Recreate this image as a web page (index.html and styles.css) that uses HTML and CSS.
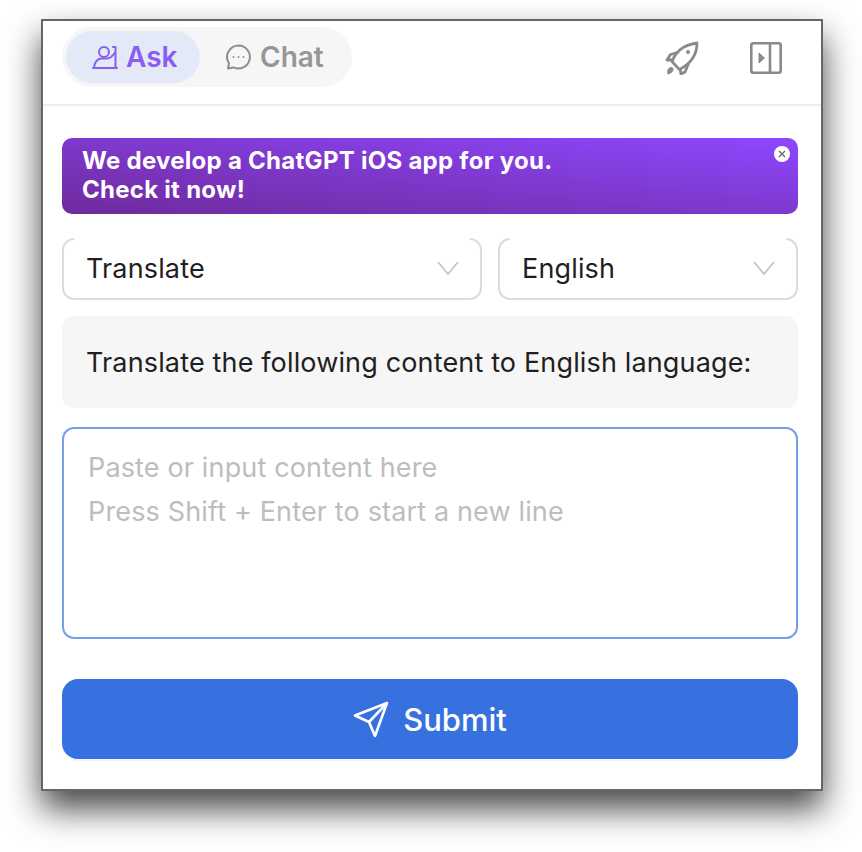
FILE: index.html
```html
<!DOCTYPE html>
<html lang="en">
<head>
<meta charset="utf-8">
<title>Ask</title>
<link rel="stylesheet" href="styles.css">
</head>
<body>
<main class="window">
  <header class="topbar">
    <nav class="tabs">
      <div class="tab tab-active">
        <svg class="tab-icon" viewBox="0 0 26 26" fill="none" stroke="#8b5cf0" stroke-width="2" stroke-linejoin="round" stroke-linecap="round"><path d="M1 24h24"/><path d="M2 24c0-5 3-9 7-9.500h6c4 0 6-3 8-6"/><path d="M21 3h2.500v21"/><circle cx="12" cy="8" r="5"/></svg>
        <span>Ask</span>
      </div>
      <div class="tab">
        <svg class="tab-icon" viewBox="0 0 26 26" fill="none" stroke="#8f8f8f" stroke-width="2" stroke-linejoin="round"><path d="M12.500 1.500a11.500 11.500 0 1 1-5 21.900l-5.500 1.100 1-5.200A11.500 11.500 0 0 1 12.500 1.500z"/><circle cx="7.500" cy="13" r="1" fill="#8f8f8f" stroke="none"/><circle cx="12.500" cy="13" r="1" fill="#8f8f8f" stroke="none"/><circle cx="17.500" cy="13" r="1" fill="#8f8f8f" stroke="none"/></svg>
        <span>Chat</span>
      </div>
    </nav>
    <div class="actions">
      <svg class="action rocket" viewBox="0 0 34 34" fill="none" stroke="#8a8a8a" stroke-width="2.800" stroke-linejoin="round"><path d="M11.500 25.500L7 20.500C11 10 18 4 32 2c0 13-7 21-17.500 26.500z"/><path d="M8.500 19H2l3.500-5.500 8.500-2.500"/><path d="M15 28l1 5 4-2 4-9.500"/><circle cx="23" cy="11" r="2" fill="#8a8a8a" stroke="none"/><path d="M3 33c-1-3 0-6 3-6.500 1.500-.2 2.500 1 2 2.500-.5 2-2.500 3.500-5 4z" fill="#8a8a8a" stroke-width="1"/></svg>
      <svg class="action panel" viewBox="0 0 32 32" fill="none" stroke="#8a8a8a" stroke-width="2.600" stroke-linejoin="round"><rect x="1.300" y="1.300" width="29.400" height="29.400" rx="2"/><path d="M20 1.300v29.400"/><path d="M9 11l5.500 5L9 21z" fill="#8a8a8a" stroke-width="1"/></svg>
    </div>
  </header>
  <section class="content">
    <div class="banner">
      <p>We develop a ChatGPT iOS app for you.<br>Check it now!</p>
      <span class="close"><svg viewBox="0 0 16 16" class="close-icon" fill="none" stroke="#666" stroke-width="1.300"><path d="M5 5l6 6M11 5l-6 6"/></svg></span>
    </div>
    <div class="selects">
      <div class="select select-wide">
        <span>Translate</span>
        <svg class="chevron" viewBox="0 0 22 14" fill="none" stroke="#c4c4c4" stroke-width="1.800"><path d="M1 1l10 12L21 1"/></svg>
      </div>
      <div class="select select-narrow">
        <span>English</span>
        <svg class="chevron" viewBox="0 0 22 14" fill="none" stroke="#c4c4c4" stroke-width="1.800"><path d="M1 1l10 12L21 1"/></svg>
      </div>
    </div>
    <div class="prompt">Translate the following content to English language:</div>
    <div class="input">Paste or input content here<br>Press Shift + Enter to start a new line</div>
    <button class="submit" type="button">
      <svg class="send" viewBox="0 0 36 36" fill="none" stroke="#fff" stroke-width="2.600" stroke-linejoin="round"><path d="M34 2L2 14.500l14 6.500 6 14z"/><path d="M34 2L16 21"/></svg>
      <span>Submit</span>
    </button>
  </section>
</main>
</body>
</html>
```
FILE: styles.css
```css
* { box-sizing: border-box; }
html, body { margin: 0; height: 852px; overflow: hidden; background: #fff; }
body { padding: 19px 0 0 41px; font-family: Inter, "Liberation Sans", sans-serif; color: #1f1f1f; }
.window {
  width: 782px; height: 772px; background: #fff; border: 2px solid #666;
  box-shadow: 0 18px 32px rgba(0, 0, 0, .72);
}
.topbar {
  height: 85px; border-bottom: 2px solid #eee; padding: 6px 23px 0 19px;
  display: flex; justify-content: space-between; align-items: flex-start;
}
.tabs { width: 290px; height: 60px; border-radius: 30px; background: #f6f6f6; padding: 4px; display: flex; }
.tab {
  height: 52px; border-radius: 26px; display: flex; align-items: center; gap: 8px;
  padding: 0 24px 0 26px; font-size: 28px; font-weight: 600; color: #969696;
}
.tab-active { width: 134px; background: #e3e9f7; color: #8b5cf0; }
.tab-icon { width: 26px; height: 26px; flex: none; }
.actions { display: flex; align-items: center; gap: 51px; padding: 14px 16px 0 0; }
.action { display: block; }
.rocket { width: 34px; height: 34px; }
.panel { width: 32px; height: 32px; }
.content { padding: 32px 23px 0 19px; display: flex; flex-direction: column; }
.banner {
  position: relative; height: 76px; border-radius: 10px; padding: 8px 20px;
  background: linear-gradient(to top right, #6f2a9c 0%, #8e47ff 100%);
  color: #fff; font-size: 24px; font-weight: 700; line-height: 29px; letter-spacing: .27px;
}
.banner p { margin: 0; }
.close {
  position: absolute; top: 8px; right: 8px; width: 16px; height: 16px;
  border-radius: 50%; background: #fff;
}
.close-icon { display: block; width: 16px; height: 16px; }
.selects { display: flex; gap: 16px; margin-top: 24px; }
.select {
  position: relative; height: 62px; border: 2px solid #dcdcdc; border-radius: 12px;
  padding: 0 21px 2px 22px; display: flex; align-items: center; justify-content: space-between;
  font-size: 27px; letter-spacing: .15px;
}
.select::before {
  content: ""; position: absolute; top: -2px; left: 10px; right: 10px; height: 2px; background: #fff;
}
.select-wide { width: 420px; }
.select-narrow { width: 300px; }
.chevron { width: 22px; height: 14px; }
.prompt {
  margin-top: 16px; height: 92px; border-radius: 12px; background: #f6f6f6;
  padding: 0 24px; display: flex; align-items: center; font-size: 27px; letter-spacing: .15px; white-space: nowrap;
}
.input {
  margin-top: 19px; height: 212px; border: 2px solid #75a0e8; border-radius: 12px;
  padding: 17px 24px; font-size: 27px; letter-spacing: .15px; line-height: 44px; color: #bdbdbd;
}
.submit {
  margin-top: 40px; height: 80px; width: 736px; border: 0; border-radius: 16px; background: #3771e0;
  box-shadow: 0 2px 0 #f1f5fd; color: #fff; font: 450 31px Inter, "Liberation Sans", sans-serif;
  display: flex; align-items: center; justify-content: center; gap: 14px; padding: 0;
}
.send { width: 36px; height: 36px; }
```
